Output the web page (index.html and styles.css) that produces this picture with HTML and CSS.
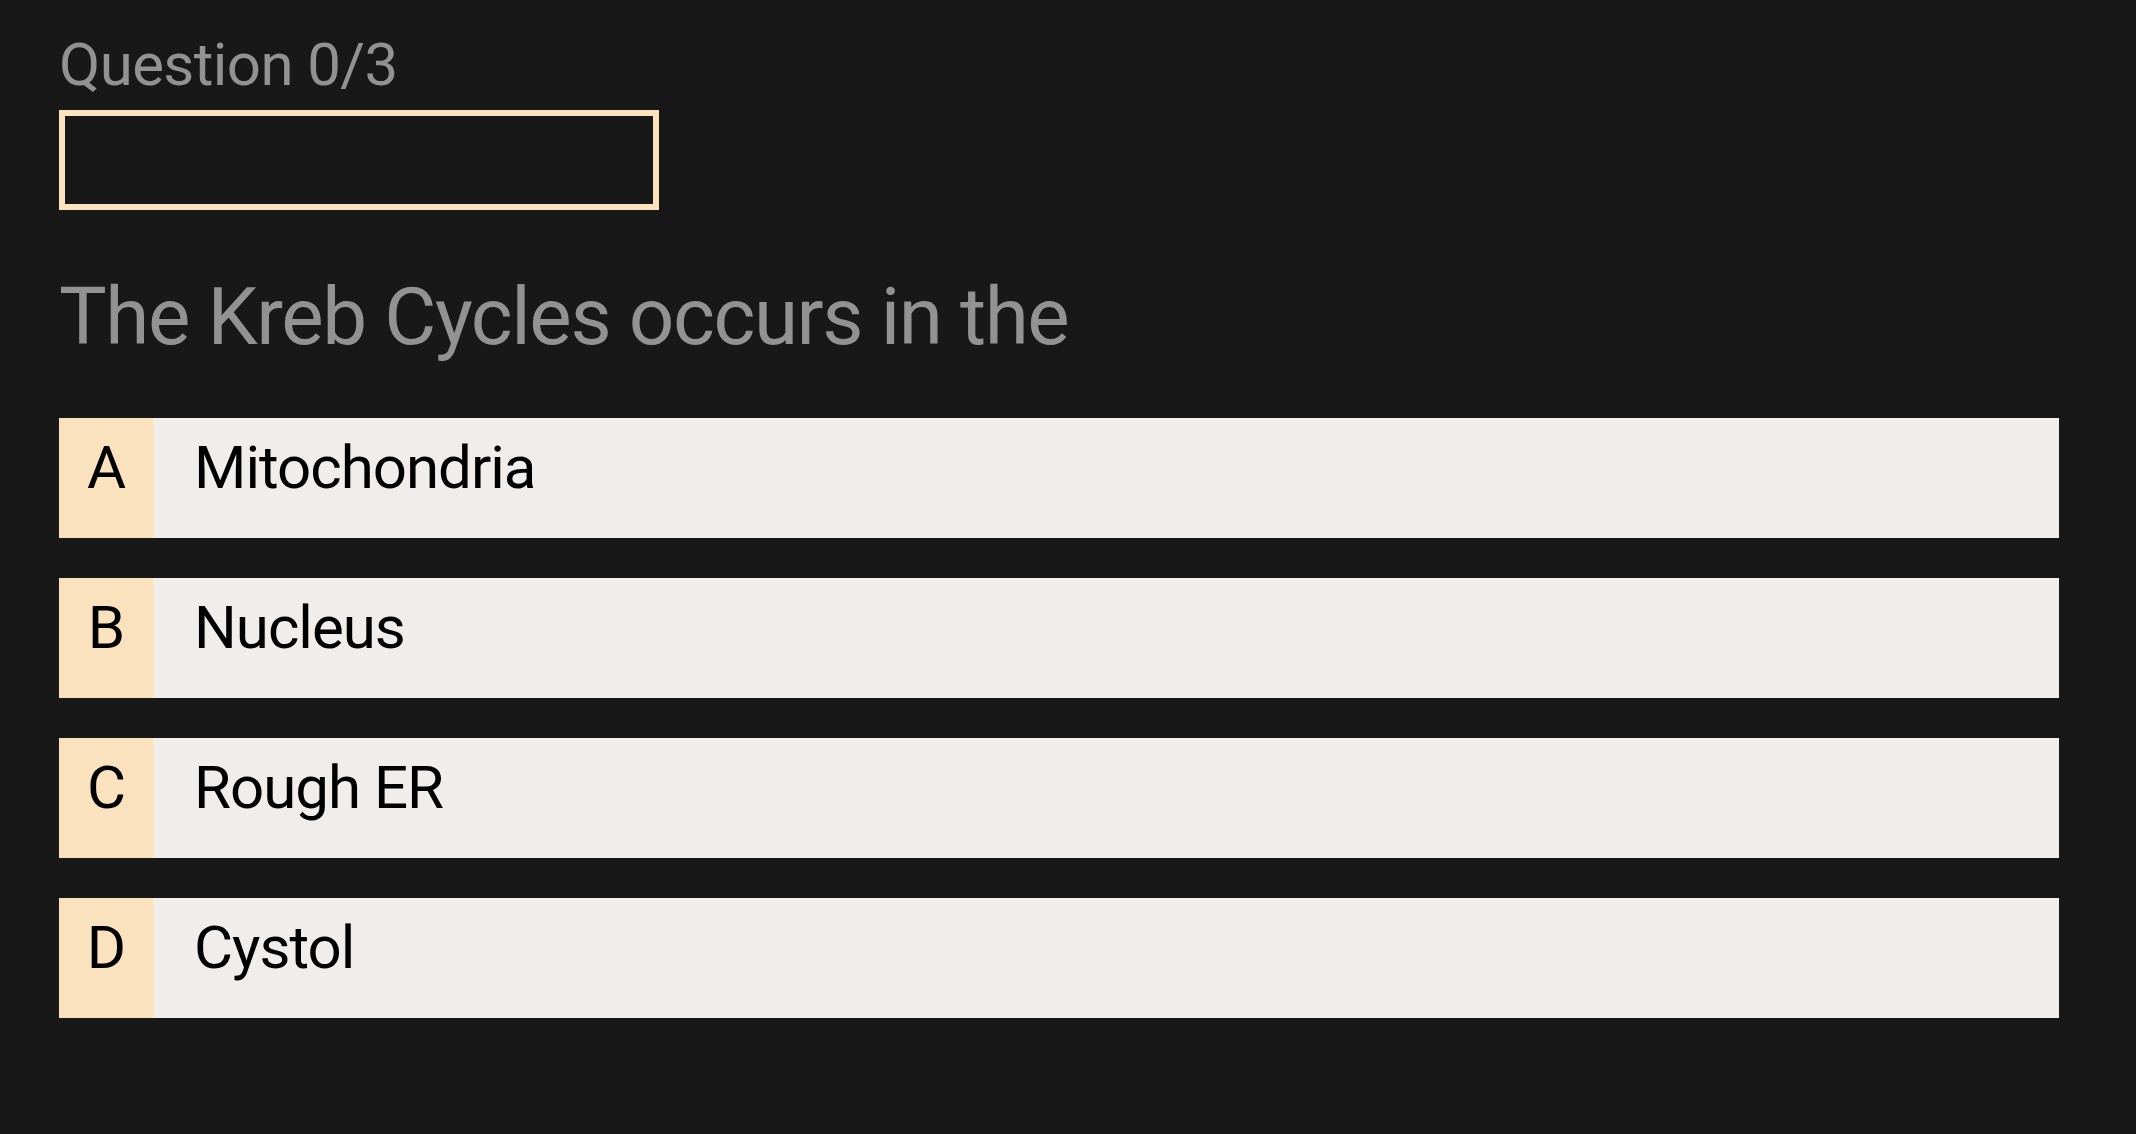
FILE: index.html
```html
<!DOCTYPE html>
<html lang="en">
<head>
<meta charset="utf-8">
<title>Quiz</title>
<link rel="stylesheet" href="styles.css">
</head>
<body>
<main class="quiz">
  <div class="progress-label">Question 0/3</div>
  <div class="progress-box"></div>
  <h1 class="question">The Kreb Cycles occurs in the</h1>
  <ul class="options">
    <li class="option"><span class="letter">A</span><span class="answer">Mitochondria</span></li>
    <li class="option"><span class="letter">B</span><span class="answer">Nucleus</span></li>
    <li class="option"><span class="letter">C</span><span class="answer">Rough ER</span></li>
    <li class="option"><span class="letter">D</span><span class="answer">Cystol</span></li>
  </ul>
</main>
</body>
</html>
```

FILE: styles.css
```css
html, body {
  margin: 0;
  padding: 0;
  background: #181818;
  height: 100%;
}

body {
  font-family: Roboto, "Noto Sans", "Liberation Sans", sans-serif;
}

.quiz {
  display: flex;
  flex-direction: column;
  padding: 29px 77px 0 59px;
}

.progress-label {
  font-size: 60px;
  line-height: 72px;
  color: #929292;
  letter-spacing: -0.6px;
}

.progress-box {
  margin-top: 9px;
  width: 600px;
  height: 100px;
  box-sizing: border-box;
  border: 6px solid #fbe3be;
}

.question {
  margin: 59px 0 0 0;
  font-size: 80px;
  line-height: 96px;
  font-weight: 400;
  color: #929292;
  letter-spacing: -1.4px;
}

.options {
  list-style: none;
  margin: 53px 0 0 0;
  padding: 0;
  display: flex;
  flex-direction: column;
  gap: 40px;
}

.option {
  display: flex;
  height: 120px;
  background: #f0edeb;
  color: #000;
  font-size: 60px;
  line-height: 72px;
}

.letter {
  width: 95px;
  flex: none;
  background: #fae2bf;
  text-align: center;
  padding-top: 14px;
}

.answer {
  padding: 14px 0 0 40px;
  letter-spacing: -1px;
}
```
